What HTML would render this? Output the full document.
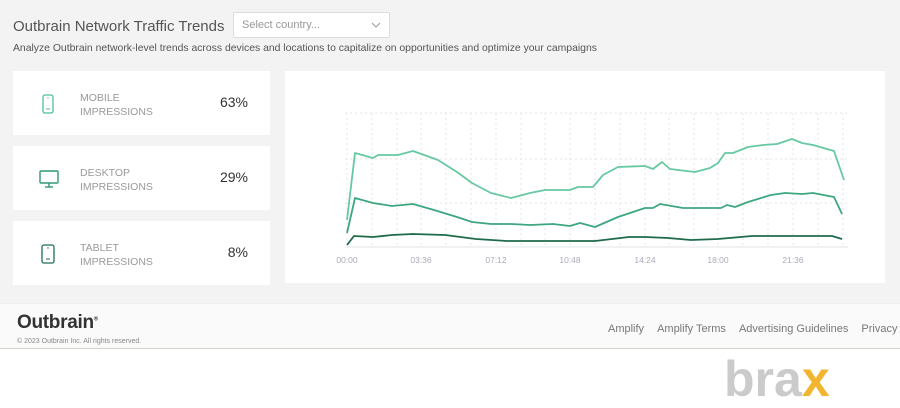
<!DOCTYPE html>
<html><head><style>
*{margin:0;padding:0;box-sizing:border-box}
body{width:900px;height:408px;background:#fff;font-family:"Liberation Sans",sans-serif;position:relative;overflow:hidden}
.top{position:absolute;left:0;top:0;width:900px;height:303px;background:#f3f3f3}
.t{position:absolute;left:13px;top:18px;font-size:15px;color:#555}
.sel{position:absolute;left:233px;top:12px;width:157px;height:26px;background:#fff;border:1px solid #ddd;border-radius:2px;font-size:11px;color:#999;padding:6px 8px}
.sub{position:absolute;left:13px;top:43px;font-size:10.4px;color:#555}
.card{position:absolute;left:13px;width:257px;height:64px;background:#fff}
.card .l{position:absolute;left:67px;top:20px;font-size:10.5px;color:#999;line-height:14px}
.card .p{position:absolute;right:22px;top:23px;font-size:14px;color:#333}
.card svg{position:absolute;left:27px;top:22px}
.chart{position:absolute;left:285px;top:71px;width:600px;height:212px;background:#fff}
.foot{position:absolute;left:0;top:303px;width:900px;height:46px;background:#fafafa;border-bottom:1px solid #d8d2cc;border-top:1px solid #eee}
.logo{position:absolute;left:17px;top:8px;font-size:19px;color:#333;font-weight:bold;letter-spacing:-.3px}
.copy{position:absolute;left:17px;top:34px;font-size:7px;color:#888}
.links{position:absolute;left:608px;top:19px;font-size:11px;color:#777;white-space:nowrap}
.links span{margin-right:13px}
.brax{position:absolute;left:724px;top:354px;font-size:50px;line-height:1;font-weight:bold;color:#cbcbcb}
</style></head><body>
<div class="top">
<div class="t">Outbrain Network Traffic Trends</div>
<div class="sel">Select country...<svg style="position:absolute;right:8px;top:9px" width="10" height="6"><path d="M1 1l4 4 4-4" stroke="#999" fill="none"/></svg></div>
<div class="sub">Analyze Outbrain network-level trends across devices and locations to capitalize on opportunities and optimize your campaigns</div>
<div class="card" style="top:71px"><svg width="16" height="22"><rect x="3" y="2" width="10" height="18" rx="2" fill="none" stroke="#4fbf93" stroke-width="1.3"/><line x1="6" y1="16" x2="10" y2="16" stroke="#4fbf93"/><circle cx="8" cy="5" r=".7" fill="#4fbf93"/></svg><div class="l">MOBILE<br>IMPRESSIONS</div><div class="p">63%</div></div>
<div class="card" style="top:146px"><svg width="24" height="22" style="left:25px"><rect x="2" y="3" width="18" height="12" rx="1" fill="none" stroke="#2f9a72" stroke-width="1.4"/><line x1="11" y1="15" x2="11" y2="19" stroke="#2f9a72" stroke-width="1.4"/><line x1="7" y1="19" x2="15" y2="19" stroke="#2f9a72" stroke-width="1.4"/></svg><div class="l">DESKTOP<br>IMPRESSIONS</div><div class="p">29%</div></div>
<div class="card" style="top:221px"><svg width="16" height="24"><rect x="2" y="2" width="12" height="18" rx="2" fill="none" stroke="#1e6f4f" stroke-width="1.3"/><line x1="6" y1="16" x2="10" y2="16" stroke="#1e6f4f"/><circle cx="8" cy="5" r=".7" fill="#1e6f4f"/></svg><div class="l">TABLET<br>IMPRESSIONS</div><div class="p">8%</div></div>
<div class="chart"></div>
<svg style="position:absolute;left:0;top:0" width="900" height="303">
<g stroke="#e6e6e6" stroke-dasharray="2,3" fill="none">
<path d="M345 113H848M345 159H848M345 203H848"/>
<path d="M347 113V247M372 113V247M397 113V247M421 113V247M446 113V247M471 113V247M496 113V247M521 113V247M545 113V247M570 113V247M595 113V247M620 113V247M645 113V247M669 113V247M694 113V247M718 113V247M743 113V247M768 113V247M793 113V247M818 113V247M843 113V247"/>
</g>
<line x1="345" y1="247" x2="848" y2="247" stroke="#e4e4e4"/>
<g fill="none" stroke-width="1.8" stroke-linejoin="round">
<polyline stroke="#66c9a2" points="347,220 355,153 373,158 378,155 398,155 413,151 438,160 457,172 472,183 491,193 511,198 530,193 545,190 570,190 578,187 593,187 603,175 618,167 645,166 653,169 662,162 670,169 695,172 710,168 718,163 725,153 733,153 748,147 763,145 777,144 792,139 802,143 813,145 834,151 844,180"/>
<polyline stroke="#3ea77f" points="347,233 355,198 373,203 392,206 413,204 434,210 457,217 472,222 491,224 511,224 530,225 553,224 570,226 580,223 595,227 618,217 645,208 653,208 660,204 683,208 706,208 721,208 727,205 735,207 748,202 771,195 785,193 802,194 813,193 834,197 842,214"/>
<polyline stroke="#1f6b4c" points="347,245 354,236 373,237 392,235 413,234 445,235 476,239 507,241 553,241 595,241 629,237 645,237 668,238 691,240 718,239 752,236 783,236 832,236 842,239"/>
</g>
<g font-size="8.5" fill="#aab" font-family="Liberation Sans" text-anchor="middle">
<text x="347" y="263">00:00</text><text x="421" y="263">03:36</text><text x="496" y="263">07:12</text><text x="570" y="263">10:48</text><text x="645" y="263">14:24</text><text x="718" y="263">18:00</text><text x="793" y="263">21:36</text>
</g>
</svg>
</div>
<div class="foot">
<div class="logo">Outbrain<sup style="font-size:6px">®</sup></div>
<div class="copy">© 2023 Outbrain Inc. All rights reserved.</div>
<div class="links"><span>Amplify</span><span>Amplify Terms</span><span>Advertising Guidelines</span><span>Privacy</span></div>
</div>
<div class="brax">bra<span style="color:#f2b530">x</span></div>
</body></html>
